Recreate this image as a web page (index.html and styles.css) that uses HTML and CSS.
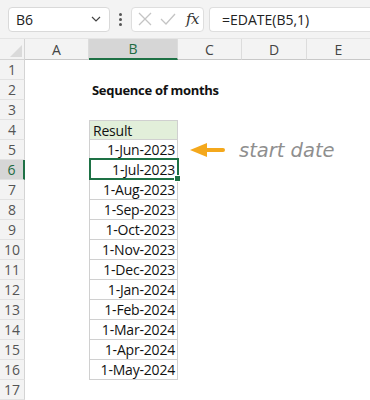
FILE: index.html
```html
<!DOCTYPE html>
<html>
<head>
<meta charset="utf-8">
<link rel="stylesheet" href="styles.css">
</head>
<body>
<div class="toolbar">
  <div class="namebox"><span>B6</span>
    <svg class="chev" width="10" height="6" viewBox="0 0 10 6"><path d="M1 1 L5 5 L9 1" fill="none" stroke="#444" stroke-width="1.2"/></svg>
  </div>
  <div class="dots"><i></i><i></i><i></i></div>
  <div class="fxbox">
    <svg width="14" height="14" viewBox="0 0 14 14"><path d="M1 1 L13 13 M13 1 L1 13" stroke="#c4c4c4" stroke-width="1.3" fill="none"/></svg>
    <svg width="16" height="14" viewBox="0 0 16 14"><path d="M1 7 L6 12 L15 2" stroke="#c4c4c4" stroke-width="1.3" fill="none"/></svg>
    <span class="fx">fx</span>
  </div>
  <div class="formula">=EDATE(B5,1)</div>
</div>
<div class="sheet">
  <div class="corner"><svg width="12" height="12" viewBox="0 0 12 12"><path d="M12 0 L12 12 L0 12 Z" fill="#dadada"/></svg></div>
  <div class="colh">A</div><div class="colh sel">B</div><div class="colh">C</div><div class="colh">D</div><div class="colh last">E</div>

  <div class="rowh">1</div><div class="c"></div><div class="c"></div><div class="c"></div><div class="c"></div><div class="c"></div>
  <div class="rowh">2</div><div class="c"></div><div class="c title">Sequence of months</div><div class="c"></div><div class="c"></div><div class="c"></div>
  <div class="rowh">3</div><div class="c"></div><div class="c"></div><div class="c"></div><div class="c"></div><div class="c"></div>
  <div class="rowh">4</div><div class="c"></div><div class="c t head">Result</div><div class="c"></div><div class="c"></div><div class="c"></div>
  <div class="rowh">5</div><div class="c"></div><div class="c t">1-Jun-2023</div>
  <div class="note">
    <svg width="36" height="16" viewBox="0 0 36 16"><path d="M17 8 L34 8" stroke="#f4a81c" stroke-width="4" stroke-linecap="round"/><path d="M1 8 L18 1 L18 15 Z" fill="#f4a81c"/></svg>
    <span class="hand">start date</span>
  </div>
  <div class="rowh selr">6</div><div class="c"></div><div class="c t active">1-Jul-2023</div><div class="c"></div><div class="c"></div><div class="c"></div>
  <div class="rowh">7</div><div class="c"></div><div class="c t">1-Aug-2023</div><div class="c"></div><div class="c"></div><div class="c"></div>
  <div class="rowh">8</div><div class="c"></div><div class="c t">1-Sep-2023</div><div class="c"></div><div class="c"></div><div class="c"></div>
  <div class="rowh">9</div><div class="c"></div><div class="c t">1-Oct-2023</div><div class="c"></div><div class="c"></div><div class="c"></div>
  <div class="rowh">10</div><div class="c"></div><div class="c t">1-Nov-2023</div><div class="c"></div><div class="c"></div><div class="c"></div>
  <div class="rowh">11</div><div class="c"></div><div class="c t">1-Dec-2023</div><div class="c"></div><div class="c"></div><div class="c"></div>
  <div class="rowh">12</div><div class="c"></div><div class="c t">1-Jan-2024</div><div class="c"></div><div class="c"></div><div class="c"></div>
  <div class="rowh">13</div><div class="c"></div><div class="c t">1-Feb-2024</div><div class="c"></div><div class="c"></div><div class="c"></div>
  <div class="rowh">14</div><div class="c"></div><div class="c t">1-Mar-2024</div><div class="c"></div><div class="c"></div><div class="c"></div>
  <div class="rowh">15</div><div class="c"></div><div class="c t">1-Apr-2024</div><div class="c"></div><div class="c"></div><div class="c"></div>
  <div class="rowh">16</div><div class="c"></div><div class="c t">1-May-2024</div><div class="c"></div><div class="c"></div><div class="c"></div>
  <div class="rowh">17</div><div class="c"></div><div class="c"></div><div class="c"></div><div class="c"></div><div class="c"></div>
</div>
</body>
</html>
```
FILE: styles.css
```css
* { box-sizing: border-box; }
html, body { margin: 0; padding: 0; }
body {
  width: 370px; height: 400px; overflow: hidden;
  background: #fff;
  font-family: "Open Sans", "Noto Sans", sans-serif;
  color: #222;
}
.toolbar {
  height: 39px;
  background: #f3f3f3;
  display: flex;
  align-items: center;
  padding: 0 0 0 8px;
  border-bottom: 1px solid #e4e4e4;
}
.namebox {
  width: 102px; height: 25px;
  background: #fff;
  border: 1px solid #d9d9d9;
  border-radius: 4px;
  display: flex; align-items: center; justify-content: space-between;
  padding: 0 8px 0 7px;
  font-size: 14px; color: #222;
}
.dots {
  width: 21px;
  display: flex; flex-direction: column; align-items: center; gap: 2px;
}
.dots i { width: 3px; height: 3px; background: #555; border-radius: 50%; display: block; }
.fxbox {
  width: 73px; height: 25px;
  background: #fff;
  border: 1px solid #dedede;
  border-radius: 4px;
  display: flex; align-items: center;
  padding: 0 0 0 6px; gap: 8px;
}
.fx {
  font-family: "DejaVu Serif", "Liberation Serif", serif;
  font-style: italic;
  font-size: 15px;
  color: #333;
  margin-left: 2px;
  letter-spacing: -0.5px;
}
.formula {
  margin-left: 5px;
  flex: 1;
  height: 25px;
  background: #fff;
  border: 1px solid #dedede;
  border-right: none;
  border-radius: 4px 0 0 4px;
  display: flex; align-items: center;
  padding-left: 12px;
  font-size: 14px; color: #222;
}
.sheet {
  display: grid;
  grid-template-columns: 25px 64px 89px 64px 65px 63px;
  grid-template-rows: 21px;
  grid-auto-rows: 20px;
  font-size: 13.5px;
}
.corner {
  background: #f3f3f3;
  border-right: 1px solid #d4d4d4;
  border-bottom: 1px solid #d4d4d4;
  display: flex; align-items: flex-end; justify-content: flex-end;
  padding: 0 2px 2px 0;
}
.colh {
  background: #f3f3f3;
  border-right: 1px solid #dcdcdc;
  border-bottom: 1px solid #c8c8c8;
  display: flex; align-items: center; justify-content: center;
  color: #444; font-size: 14px;
}
.colh.last { border-right: none; }
.colh.sel {
  background: #d6d6d6;
  border-bottom: 2px solid #1e7145;
  color: #1e6b42;
}
.rowh {
  background: #f3f3f3;
  border-right: 1px solid #d4d4d4;
  border-bottom: 1px solid #e2e2e2;
  display: flex; align-items: center; justify-content: center;
  color: #555; font-size: 14px;
}
.rowh.selr {
  background: #d6d6d6;
  border-right: 2px solid #1e7145;
  color: #1e6b42;
}
.c {
  display: flex; align-items: center;
  padding: 0 2px 0 3px;
  white-space: nowrap;
  color: #111;
}
.title { font-weight: 700; overflow: visible; font-size: 13px; letter-spacing: -0.3px; }
.t {
  justify-content: flex-end;
  border-left: 1px solid #d0d0d0;
  border-right: 1px solid #d0d0d0;
  border-bottom: 1px solid #d0d0d0;
  font-size: 14px;
  letter-spacing: -0.2px;
}
.t.head {
  justify-content: flex-start;
  background: #e2efda;
  border-top: 1px solid #d0d0d0;
}
.active { position: relative; }
.active::after {
  content: "";
  position: absolute;
  left: -1px; top: -2px; right: -2px; bottom: -1px;
  border: 2px solid #1e7145;
}
.active::before {
  content: "";
  position: absolute;
  right: -4px; bottom: -3px;
  width: 5px; height: 5px;
  background: #1e7145;
  border: 1px solid #fff;
  z-index: 2;
}
.note {
  grid-column: 4 / 7;
  display: flex; align-items: center;
  padding-left: 11px; gap: 14px;
}
.hand {
  font-family: "DejaVu Sans", sans-serif;
  font-style: italic;
  font-weight: 200;
  font-size: 19.5px;
  color: #8f8f8f;
  white-space: nowrap;
}
```
